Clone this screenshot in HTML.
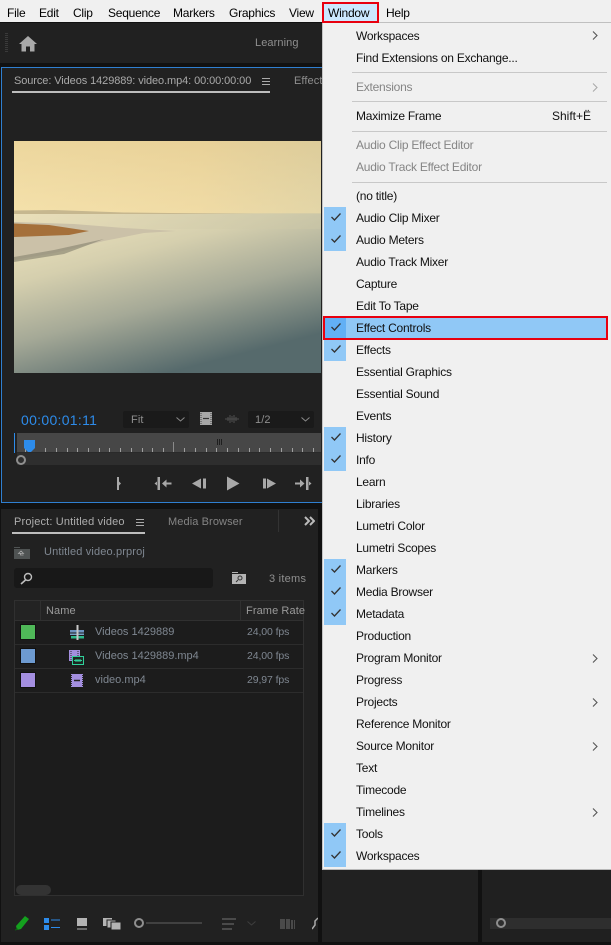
<!DOCTYPE html>
<html><head><meta charset="utf-8"><style>
html,body{margin:0;padding:0;background:#111}
body{width:611px;height:945px;position:relative;overflow:hidden;font:12px/16px "Liberation Sans",sans-serif}
div,span,svg{position:absolute}
.t{white-space:nowrap}
.mb{top:5px;color:#000;white-space:nowrap;letter-spacing:-.02em;z-index:3}
.p{background:#212121}
.m{left:33px;color:#111;white-space:nowrap;letter-spacing:-.02em;margin-top:1px}
.d{color:#858585}
.c{left:1px;width:22px;height:22px;background:#90c8f6}
.k{left:7px;width:12px;height:10px}
.s{left:29px;width:255px;height:1px;background:#c8c8c8;margin-top:1px}
.a{left:269px;width:6px;height:9px;margin-top:1px}
.g{color:#8f8f8f;font-size:11px;letter-spacing:.1px}
.n{color:#7f8791;font-size:11px}
.f{color:#7f8791;font-size:10.5px;letter-spacing:-.1px}
</style></head><body>
<div style="left:0;top:0;width:611px;height:22px;background:#f0f0f0"></div>
<div class="mb" style="left:7px">File</div><div class="mb" style="left:39px">Edit</div><div class="mb" style="left:73px">Clip</div><div class="mb" style="left:108px">Sequence</div><div class="mb" style="left:173px">Markers</div><div class="mb" style="left:229px">Graphics</div><div class="mb" style="left:289px">View</div>
<div style="left:322px;top:2px;width:53px;height:17px;border:2px solid #e8000f;background:#cce8ff;z-index:2"></div>
<div class="mb" style="left:328px">Window</div><div class="mb" style="left:386px">Help</div>

<div class="p" style="left:0;top:23px;width:322px;height:40px"></div>
<div style="left:5px;top:33px;width:3px;height:20px;background:repeating-linear-gradient(#3a3a3a 0 1px,#212121 1px 2px)"></div>
<svg style="left:19px;top:36px" width="18" height="16" viewBox="0 0 18 16"><path d="M9 0L0 8h2.500v7.500h4.500v-5h4v5h4.500V8H18z" fill="#a9a9a9"/></svg>
<div class="t g" style="left:255px;top:35px">Learning</div>

<div class="p" style="left:1px;top:67px;width:321px;height:436px;border:1px solid #2f7fd0;border-right:0;box-sizing:border-box"></div>
<div class="t" style="left:14px;top:73px;color:#a9a9a9;font-size:11px;letter-spacing:-.09px">Source: Videos 1429889: video.mp4: 00:00:00:00</div>
<div style="left:262px;top:78px;width:8px;height:1px;background:#aaa;box-shadow:0 3px #aaa,0 6px #aaa"></div>
<div style="left:12px;top:91px;width:258px;height:2px;background:#bdbdbd"></div>
<div class="t g" style="left:294px;top:73px">Effect</div>

<svg style="left:14px;top:141px" width="307" height="232" viewBox="0 0 307 232">
<defs>
<linearGradient id="sky" x1="0" y1="0" x2="1" y2="0"><stop offset="0" stop-color="#f3dfa8"/><stop offset=".6" stop-color="#edd7a0"/><stop offset="1" stop-color="#d9cea3"/></linearGradient>
<linearGradient id="skyv" x1="0" y1="0" x2="0" y2="1"><stop offset="0" stop-color="#e2c98d" stop-opacity=".4"/><stop offset="1" stop-color="#f6e4b0" stop-opacity=".35"/></linearGradient>
<linearGradient id="wat" x1="0" y1="0" x2=".5" y2="1"><stop offset="0" stop-color="#f2e7c0"/><stop offset=".35" stop-color="#d5cfae"/><stop offset=".65" stop-color="#a5a997"/><stop offset="1" stop-color="#566a6c"/></linearGradient>
<linearGradient id="band" x1="0" y1="0" x2="1" y2="0"><stop offset="0" stop-color="#e4dab6"/><stop offset="1" stop-color="#c9c5a6"/></linearGradient>
</defs>
<rect width="307" height="73" fill="url(#sky)"/><rect width="307" height="73" fill="url(#skyv)"/>
<rect y="73" width="307" height="159" fill="url(#wat)"/>
<rect y="72" width="307" height="16" fill="url(#band)" opacity=".6"/>
<path d="M0 69.500L40 69L110 71.500L240 73L0 73z" fill="#c6b78f"/>
<path d="M0 81L60 83L110 87L162 90L130 92L90 100L40 112L0 119z" fill="#cbc1a8"/>
<path d="M0 82.500L35 84L75 90L55 94L0 96z" fill="#a5703a"/>
<path d="M0 116L40 109L90 98L50 113L0 121z" fill="#8f8a76" opacity=".7"/>
</svg>

<div class="t" style="left:21px;top:412px;color:#2d8ceb;font-size:14px;letter-spacing:.3px">00:00:01:11</div>
<div style="left:123px;top:411px;width:66px;height:17px;background:#1a1a1a;border-radius:2px"></div>
<div class="t g" style="left:131px;top:412px">Fit</div>
<svg style="left:176px;top:417px" width="9" height="5"><path d="M.5.500L4.500 4 8.500.500" fill="none" stroke="#8a8a8a"/></svg>
<svg style="left:200px;top:412px" width="12" height="13"><rect width="12" height="13" fill="#a8a8a8"/><path d="M1 1v11M11 1v11" stroke="#444" stroke-dasharray="1 1"/><path d="M3 6.500h6" stroke="#333" stroke-width="1.200"/></svg>
<svg style="left:225px;top:414px" width="14" height="10"><path d="M0 5h14M3 3v4M5 1v8M7 2v6M9 1v8M11 3v4" stroke="#4e4e4e"/></svg>
<div style="left:248px;top:411px;width:66px;height:17px;background:#1a1a1a;border-radius:2px"></div>
<div class="t g" style="left:255px;top:412px">1/2</div>
<svg style="left:301px;top:417px" width="9" height="5"><path d="M.5.500L4.500 4 8.500.500" fill="none" stroke="#8a8a8a"/></svg>

<div style="left:17px;top:433px;width:304px;height:19px;background:#474747"></div>
<div style="left:17px;top:453px;width:304px;height:12px;background:#2e2e2e"></div>
<div style="left:14px;top:433px;width:1px;height:20px;background:#2d8ceb"></div>
<svg style="left:17px;top:448px" width="304" height="4"><path d="M8.500 0v4M28.500 0v4M39.500 0v4M50.500 0v4M60.500 0v4M71.500 0v4M82.500 0v4M92.500 0v4M103.500 0v4M114.500 0v4M125.500 0v4M135.500 0v4M146.500 0v4M167.500 0v4M178.500 0v4M189.500 0v4M199.500 0v4M210.500 0v4M221.500 0v4M232.500 0v4M242.500 0v4M253.500 0v4M264.500 0v4M275.500 0v4M285.500 0v4M296.500 0v4" stroke="#a0a0a0"/></svg>
<div style="left:17px;top:452px;width:304px;height:1px;background:#2a2a2a"></div>
<div style="left:173px;top:442px;width:1px;height:10px;background:#8a8a8a"></div>
<div style="left:217px;top:439px;width:5px;height:6px;background:repeating-linear-gradient(90deg,#1e1e1e 0 1px,#474747 1px 2px)"></div>
<svg style="left:24px;top:440px" width="11" height="12"><path d="M0 0h11v8l-4 4H4L0 8z" fill="#2d8ceb"/></svg>
<div style="left:16px;top:455px;width:6px;height:6px;border:2px solid #8f8f8f;border-radius:50%"></div>
<svg style="left:100px;top:473px" width="220" height="22" fill="#a8a8a8">
<path d="M17 4h2v13h-2zM19 8.500l2 2-2 2z"/>
<path d="M57.500 4h2.500v13h-2.500zM57 8.500l-2.500 2 2.500 2zM62 10.500l4.500-4v3h5v2h-5v3z"/>
<path d="M92 10.500l9-5v10zM103 5.500h3v10h-3z"/>
<path d="M127 3.500l12.500 7-12.500 7z"/>
<path d="M163 5.500h3v10h-3zM167 5.500l9 5-9 5z"/>
<path d="M195 9.500h5v-3l4.500 4-4.500 4v-3h-5zM206 4h2.500v13H206zM209 8.500l2.500 2-2.500 2z"/>
</svg>

<div class="p" style="left:1px;top:509px;width:317px;height:433px"></div>
<div class="t" style="left:14px;top:514px;color:#adadad;font-size:11px;letter-spacing:.16px">Project: Untitled video</div>
<div style="left:136px;top:519px;width:8px;height:1px;background:#aaa;box-shadow:0 3px #aaa,0 6px #aaa"></div>
<div style="left:12px;top:532px;width:133px;height:2px;background:#bdbdbd"></div>
<div class="t" style="left:168px;top:514px;color:#858585;font-size:11px;letter-spacing:.1px">Media Browser</div>
<div style="left:278px;top:510px;width:1px;height:22px;background:#333"></div>
<svg style="left:304px;top:516px" width="11" height="10"><path d="M1 1l4 4-4 4M6 1l4 4-4 4" fill="none" stroke="#bbb" stroke-width="2"/></svg>
<svg style="left:14px;top:547px" width="16" height="12"><path d="M0 0h6v1H0zM0 2h16v10H0z" fill="#4f5353"/><path d="M7 4L4.500 6.500h5zM6.500 6v2h3" fill="none" stroke="#a8a8a8" stroke-width=".8"/></svg>
<div class="t n" style="left:44px;top:544px;letter-spacing:.15px">Untitled video.prproj</div>
<div style="left:14px;top:568px;width:199px;height:20px;background:#181818;border-radius:3px"></div>
<svg style="left:20px;top:572px" width="13" height="13"><circle cx="8" cy="5" r="3.500" fill="none" stroke="#bdbdbd" stroke-width="1.400"/><path d="M5.500 8L1 12" stroke="#bdbdbd" stroke-width="1.600"/></svg>
<svg style="left:232px;top:572px" width="15" height="12"><path d="M0 0h6v1H0zM0 2h14v10H0z" fill="#b4b4b4"/><circle cx="8" cy="6" r="2" fill="none" stroke="#333"/><path d="M6 8L4 10" stroke="#333"/></svg>
<div class="t g" style="left:269px;top:571px;letter-spacing:.25px">3 items</div>

<div style="left:14px;top:600px;width:290px;height:296px;background:#1c1c1c;border:1px solid #303030;box-sizing:border-box"></div>
<div style="left:15px;top:601px;width:288px;height:19px;background:#232323"></div>
<div style="left:40px;top:601px;width:1px;height:19px;background:#303030"></div>
<div style="left:240px;top:601px;width:1px;height:19px;background:#303030"></div>
<div class="t g" style="left:46px;top:603px;color:#9a9a9a">Name</div>
<div class="t g" style="left:246px;top:603px;color:#9a9a9a">Frame Rate</div>
<div style="left:15px;top:620px;width:288px;height:1px;background:#303030"></div>
<div style="left:15px;top:644px;width:288px;height:1px;background:#2c2c2c"></div>
<div style="left:15px;top:668px;width:288px;height:1px;background:#2c2c2c"></div>
<div style="left:15px;top:692px;width:288px;height:1px;background:#2c2c2c"></div>
<div style="left:20px;top:624px;width:14px;height:14px;background:#4fb858;border:1px solid #111"></div>
<div style="left:20px;top:648px;width:14px;height:14px;background:#6d9ad0;border:1px solid #111"></div>
<div style="left:20px;top:672px;width:14px;height:14px;background:#a48fe0;border:1px solid #111"></div>
<svg style="left:70px;top:625px" width="15" height="15"><path d="M0 5h14v2.500H0z" fill="#6d93c0"/><path d="M0 8.500h14V10H0z" fill="#7aa0c8"/><path d="M1 11h13v2.500H1z" fill="#2fb98a"/><rect x="6.500" y="0" width="2" height="15" fill="#c8c8c8"/></svg>
<svg style="left:69px;top:650px" width="16" height="15"><rect width="11" height="11" fill="#a48fe0"/><path d="M2 1v9M9 1v9" stroke="#2a2a2a" stroke-dasharray="1 1"/><rect x="3.500" y="6.500" width="11" height="8" fill="#1c2622" stroke="#2fd09a"/><path d="M5 10.500h8M7 9v3M9 9v3M11 9v3" stroke="#2fd09a"/></svg>
<svg style="left:71px;top:674px" width="12" height="13"><rect width="12" height="13" fill="#a48fe0"/><path d="M.5 1v11M11.500 1v11" stroke="#2a2a2a" stroke-dasharray="1 1"/><path d="M3 6.500h6" stroke="#222" stroke-width="1.500"/></svg>
<div class="t n" style="left:95px;top:624px">Videos 1429889</div>
<div class="t n" style="left:95px;top:648px">Videos 1429889.mp4</div>
<div class="t n" style="left:95px;top:672px">video.mp4</div>
<div class="t f" style="left:247px;top:624px">24,00 fps</div>
<div class="t f" style="left:247px;top:648px">24,00 fps</div>
<div class="t f" style="left:247px;top:672px">29,97 fps</div>
<div style="left:16px;top:885px;width:35px;height:10px;background:#333;border-radius:5px"></div>

<svg style="left:15px;top:916px" width="14" height="15"><path d="M10 0l4 3-8 10-4 1-1-4z" fill="#14a01e"/><path d="M0 14l3-1" stroke="#0a6a10"/></svg>
<svg style="left:44px;top:918px" width="17" height="12"><path d="M0 0h5v5H0zM0 7h5v5H0z" fill="#2d8ceb"/><path d="M7 2h9M7 9.500h9" stroke="#2d8ceb"/></svg>
<svg style="left:77px;top:918px" width="11" height="12"><rect width="10" height="8" fill="#b4b4b4"/><path d="M0 11h10" stroke="#b4b4b4"/></svg>
<svg style="left:103px;top:918px" width="19" height="12"><path d="M0 0h9v8H0z" fill="#b4b4b4"/><path d="M4 2h9v8H4z" fill="#b4b4b4" stroke="#212121"/><path d="M8 4h10v8H8z" fill="#b4b4b4" stroke="#212121"/></svg>
<div style="left:134px;top:918px;width:6px;height:6px;border:2px solid #8f8f8f;border-radius:50%"></div>
<div style="left:146px;top:922px;width:56px;height:2px;background:#414141"></div>
<svg style="left:222px;top:918px" width="14" height="12"><path d="M0 0h14v2H0zM0 5h12v2H0zM0 10h10v2H0z" fill="#4a4a4a"/></svg>
<svg style="left:247px;top:921px" width="9" height="5"><path d="M.5.500L4.500 4 8.500.500" fill="none" stroke="#3e3e3e"/></svg>
<svg style="left:280px;top:918px" width="16" height="12"><path d="M0 1h5v10H0zM6 1h4v10H6zM11 2h2v9h-2zM14 2h1v9h-1z" fill="#4a4a4a"/></svg>
<svg style="left:312px;top:917px" width="6" height="14"><path d="M6 1L3 4v4L0 12" fill="none" stroke="#aaa" stroke-width="1.500"/></svg>

<div class="p" style="left:322px;top:867px;width:156px;height:75px"></div>
<div style="left:482px;top:867px;width:129px;height:75px;background:#202020"></div>
<div style="left:490px;top:918px;width:121px;height:11px;background:#2e2e2e"></div>
<div style="left:496px;top:918px;width:6px;height:6px;border:2px solid #8f8f8f;border-radius:50%"></div>

<div style="left:322px;top:22px;width:289px;height:848px;background:#f0f0f0;border-top:1px solid #c0c0c0;border-left:1px solid #c4c4c4;border-bottom:1px solid #b8b8b8;box-sizing:border-box;overflow:hidden">

<div class="c" style="top:184px"></div><div class="c" style="top:206px"></div>
<div class="c" style="top:316px;height:22px"></div>
<div class="c" style="top:404px"></div><div class="c" style="top:426px"></div>
<div class="c" style="top:536px"></div><div class="c" style="top:558px"></div><div class="c" style="top:580px"></div>
<div class="c" style="top:800px"></div><div class="c" style="top:822px"></div>
<div style="left:0;top:293px;width:285px;height:24px;box-sizing:border-box;border:2px solid #e8000f;background:#90c8f6"></div>
<div style="left:2px;top:295px;width:21px;height:20px;background:#62b0f5"></div>

<svg class="k" style="top:189px" viewBox="0 0 12 10"><path d="M1.500 5l3 3 6-6.500" fill="none" stroke="#333" stroke-width="1.300"/></svg>
<svg class="k" style="top:211px" viewBox="0 0 12 10"><path d="M1.500 5l3 3 6-6.500" fill="none" stroke="#333" stroke-width="1.300"/></svg>
<svg class="k" style="top:299px" viewBox="0 0 12 10"><path d="M1.500 5l3 3 6-6.500" fill="none" stroke="#333" stroke-width="1.300"/></svg>
<svg class="k" style="top:321px" viewBox="0 0 12 10"><path d="M1.500 5l3 3 6-6.500" fill="none" stroke="#333" stroke-width="1.300"/></svg>
<svg class="k" style="top:409px" viewBox="0 0 12 10"><path d="M1.500 5l3 3 6-6.500" fill="none" stroke="#333" stroke-width="1.300"/></svg>
<svg class="k" style="top:431px" viewBox="0 0 12 10"><path d="M1.500 5l3 3 6-6.500" fill="none" stroke="#333" stroke-width="1.300"/></svg>
<svg class="k" style="top:541px" viewBox="0 0 12 10"><path d="M1.500 5l3 3 6-6.500" fill="none" stroke="#333" stroke-width="1.300"/></svg>
<svg class="k" style="top:563px" viewBox="0 0 12 10"><path d="M1.500 5l3 3 6-6.500" fill="none" stroke="#333" stroke-width="1.300"/></svg>
<svg class="k" style="top:585px" viewBox="0 0 12 10"><path d="M1.500 5l3 3 6-6.500" fill="none" stroke="#333" stroke-width="1.300"/></svg>
<svg class="k" style="top:805px" viewBox="0 0 12 10"><path d="M1.500 5l3 3 6-6.500" fill="none" stroke="#333" stroke-width="1.300"/></svg>
<svg class="k" style="top:827px" viewBox="0 0 12 10"><path d="M1.500 5l3 3 6-6.500" fill="none" stroke="#333" stroke-width="1.300"/></svg>

<div class="s" style="top:48px"></div><div class="s" style="top:77px"></div><div class="s" style="top:107px"></div><div class="s" style="top:158px"></div>

<div class="m" style="top:4px">Workspaces</div>
<div class="m" style="top:26px">Find Extensions on Exchange...</div>
<div class="m d" style="top:55px">Extensions</div>
<div class="m" style="top:84px">Maximize Frame</div>
<div class="t" style="left:229px;top:85px;color:#111">Shift+Ë</div>
<div class="m d" style="top:113px">Audio Clip Effect Editor</div>
<div class="m d" style="top:135px">Audio Track Effect Editor</div>
<div class="m" style="top:164px">(no title)</div>
<div class="m" style="top:186px">Audio Clip Mixer</div>
<div class="m" style="top:208px">Audio Meters</div>
<div class="m" style="top:230px">Audio Track Mixer</div>
<div class="m" style="top:252px">Capture</div>
<div class="m" style="top:274px">Edit To Tape</div>
<div class="m" style="top:296px">Effect Controls</div>
<div class="m" style="top:318px">Effects</div>
<div class="m" style="top:340px">Essential Graphics</div>
<div class="m" style="top:362px">Essential Sound</div>
<div class="m" style="top:384px">Events</div>
<div class="m" style="top:406px">History</div>
<div class="m" style="top:428px">Info</div>
<div class="m" style="top:450px">Learn</div>
<div class="m" style="top:472px">Libraries</div>
<div class="m" style="top:494px">Lumetri Color</div>
<div class="m" style="top:516px">Lumetri Scopes</div>
<div class="m" style="top:538px">Markers</div>
<div class="m" style="top:560px">Media Browser</div>
<div class="m" style="top:582px">Metadata</div>
<div class="m" style="top:604px">Production</div>
<div class="m" style="top:626px">Program Monitor</div>
<div class="m" style="top:648px">Progress</div>
<div class="m" style="top:670px">Projects</div>
<div class="m" style="top:692px">Reference Monitor</div>
<div class="m" style="top:714px">Source Monitor</div>
<div class="m" style="top:736px">Text</div>
<div class="m" style="top:758px">Timecode</div>
<div class="m" style="top:780px">Timelines</div>
<div class="m" style="top:802px">Tools</div>
<div class="m" style="top:824px">Workspaces</div>

<svg class="a" style="top:7px"><path d="M1 .500l4 4-4 4" fill="none" stroke="#555" stroke-width="1.100"/></svg>
<svg class="a" style="top:59px"><path d="M1 .500l4 4-4 4" fill="none" stroke="#aaa" stroke-width="1.100"/></svg>
<svg class="a" style="top:630px"><path d="M1 .500l4 4-4 4" fill="none" stroke="#555" stroke-width="1.100"/></svg>
<svg class="a" style="top:674px"><path d="M1 .500l4 4-4 4" fill="none" stroke="#555" stroke-width="1.100"/></svg>
<svg class="a" style="top:718px"><path d="M1 .500l4 4-4 4" fill="none" stroke="#555" stroke-width="1.100"/></svg>
<svg class="a" style="top:784px"><path d="M1 .500l4 4-4 4" fill="none" stroke="#555" stroke-width="1.100"/></svg>
</div>
</body></html>
